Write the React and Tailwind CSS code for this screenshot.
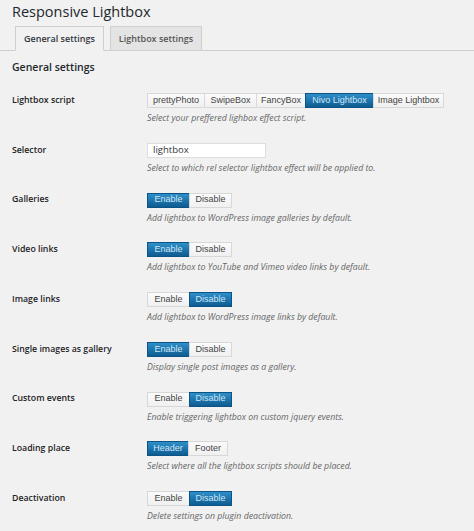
import { useState } from "react";

const sans = { fontFamily: '"Open Sans", "Liberation Sans", sans-serif' };

const rows = [
  { label: "Lightbox script", kind: "seg", opts: [["prettyPhoto", "w-[58px]"], ["SwipeBox", "w-[53px]"], ["FancyBox", "w-[50px]"], ["Nivo Lightbox", "w-[69px]"], ["Image Lightbox", "w-[71px]"]], on: 3, desc: "Select your preffered lighbox effect script." },
  { label: "Selector", kind: "input", value: "lightbox", desc: "Select to which rel selector lightbox effect will be applied to." },
  { label: "Galleries", kind: "seg", on: 0, desc: "Add lightbox to WordPress image galleries by default." },
  { label: "Video links", kind: "seg", on: 0, desc: "Add lightbox to YouTube and Vimeo video links by default." },
  { label: "Image links", kind: "seg", on: 1, desc: "Add lightbox to WordPress image links by default." },
  { label: "Single images as gallery", kind: "seg", on: 0, desc: "Display single post images as a gallery." },
  { label: "Custom events", kind: "seg", on: 1, desc: "Enable triggering lightbox on custom jquery events." },
  { label: "Loading place", kind: "seg", opts: [["Header", "w-[42px]"], ["Footer", "w-[40px]"]], on: 0, desc: "Select where all the lightbox scripts should be placed." },
  { label: "Deactivation", kind: "seg", on: 1, desc: "Delete settings on plugin deactivation." },
];

const toggle = [["Enable", "w-[43px]"], ["Disable", "w-[43px]"]];

function Segmented({ opts, on }) {
  return (
    <div className="flex h-[15px]">
      {opts.map(([t, w], i) => (
        <div key={t}
          className={`${w} flex items-center justify-center text-[9px] border -ml-px first:ml-0 ${i === on
            ? "bg-gradient-to-b from-[#2e8fc9] to-[#0d5c91] border-[#0b5485] text-[#cfe6f5]"
            : "bg-gradient-to-b from-[#fbfbfb] to-[#f0f0f0] border-[#d8d8d8] text-[#444]"}`}
          style={{ fontFamily: '"Liberation Sans", Arial, sans-serif' }}>
          {t}
        </div>
      ))}
    </div>
  );
}

export default function App() {
  const [tab] = useState(0);
  return (
    <div className="w-[474px] h-[531px] bg-[#f1f1f1] overflow-hidden text-[#23282d]" style={sans}>
      <div className="px-[12px] pt-[2px] h-[20px] leading-[20px] text-[14.5px]">Responsive Lightbox</div>

      <div className="mt-[6px] flex items-end gap-[6px] pl-[15px] border-b border-[#cfcfcf] h-[25px]">
        {["General settings", "Lightbox settings"].map((t, i) => (
          <div key={t}
            className={`h-[25px] px-[8px] flex items-center whitespace-nowrap text-[9px] font-semibold border border-[#cfcfcf] -mb-px ${i === tab
              ? "bg-[#f1f1f1] border-b-[#f1f1f1] text-[#32373c]"
              : "bg-[#e4e4e4] text-[#555]"}`}>
            {t}
          </div>
        ))}
      </div>

      <div className="px-[12px] mt-[8px] h-[16px] leading-[16px] text-[10.5px] font-semibold">General settings</div>

      <div className="mt-[18px] flex flex-col gap-[18.75px]">
        {rows.map((r) => (
          <div key={r.label} className="flex px-[12px]">
            <div className="w-[135px] h-[15px] flex items-center whitespace-nowrap text-[8.75px] font-semibold text-[#1d2125]">{r.label}</div>
            <div className="flex flex-col">
              {r.kind === "input" ? (
                <div className="w-[119px] h-[15px] bg-white border border-[#dddddd] pl-[5px] flex items-center text-[9.5px] text-[#32373c]">{r.value}</div>
              ) : (
                <Segmented opts={r.opts || toggle} on={r.on} />
              )}
              <div className="mt-[4px] leading-[12px] text-[8.75px] italic text-[#666]">{r.desc}</div>
            </div>
          </div>
        ))}
      </div>
    </div>
  );
}
